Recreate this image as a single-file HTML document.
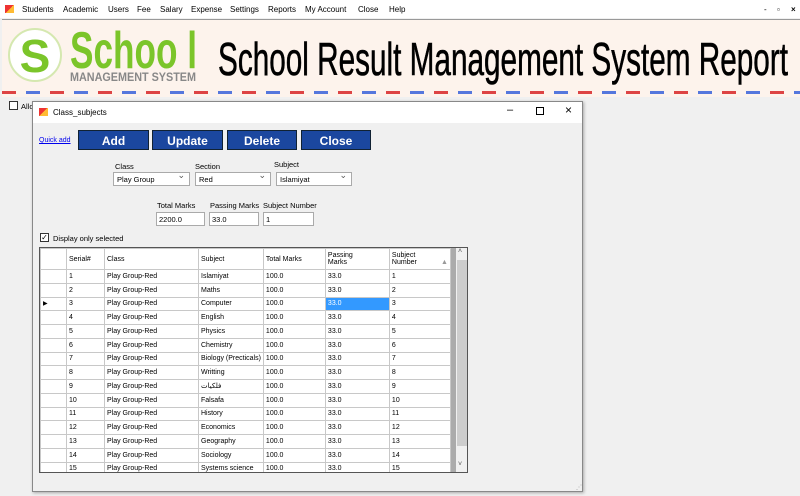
<!DOCTYPE html>
<html><head><meta charset="utf-8"><style>
*{box-sizing:border-box;margin:0;padding:0}
body{width:800px;height:496px;overflow:hidden;background:#f0f0f0;font-family:"Liberation Sans",sans-serif;font-size:8px;color:#000;position:relative}
.abs{position:absolute}
#menu{left:0;top:0;width:800px;height:18px;background:#fff;font-size:8px}
#menu span{position:absolute;top:5px}
#banner{left:2px;top:19px;width:798px;height:78px;background:#fdf3ec;border-top:1px solid #999}
.stripe{top:91px;left:2px;width:798px;height:3px;background:repeating-linear-gradient(90deg,#d44 0 14px,transparent 14px 24px,#57d 24px 38px,transparent 38px 48px)}
#dlg{left:32px;top:101px;width:551px;height:391px;background:#f0f0f0;border:1px solid #888;box-shadow:1px 1px 3px rgba(0,0,0,.3)}
.btn{position:absolute;top:28px;height:20px;background:#1b479f;color:#fff;font-weight:bold;font-size:12px;text-align:center;line-height:20px;border:1px solid #123}
.sel{position:absolute;height:14px;background:#fff;border:1px solid #aaa;font-size:7.5px;padding:2px 3px}
.sel:after{content:"⌄";position:absolute;right:4px;top:-3px;font-size:9px;color:#555}
.inp{position:absolute;height:14px;background:#fff;border:1px solid #aaa;font-size:7.5px;padding:2px 2px}
.lbl{position:absolute;font-size:7.5px}
#grid{left:39px;top:247px;width:429px;height:226px;background:#ababab;border:1px solid #555;overflow:hidden}
table{border-collapse:collapse;background:#fff;position:absolute;left:0;top:0}
td{border:1px solid #c8c8c8;height:13.75px;font-size:7px;padding:0 2px;white-space:nowrap;overflow:hidden}
tr.h td{height:21px;font-size:7px;line-height:7px}
</style></head><body>
<div id="menu" class="abs">
<div class="abs" style="left:5px;top:5px;width:9px;height:8px;background:linear-gradient(135deg,#e33 50%,#fb3 50%)"></div>
<span style="left:22px">Students</span><span style="left:63px">Academic</span><span style="left:108px">Users</span><span style="left:137px">Fee</span><span style="left:160px">Salary</span><span style="left:191px">Expense</span><span style="left:230px">Settings</span><span style="left:268px">Reports</span><span style="left:305px">My Account</span><span style="left:358px">Close</span><span style="left:389px">Help</span>
<span style="left:764px">-</span><span style="left:777px">▫</span><span style="left:791px;font-weight:bold">×</span>
</div>
<div id="banner" class="abs">
<div class="abs" style="left:6px;top:8px;width:54px;height:54px;border:2px solid #d5e8b0;border-radius:50%;background:#fff;color:#7bc52a;font-size:46px;font-weight:bold;text-align:center;line-height:52px">S</div>
<svg class="abs" style="left:0;top:0" width="798" height="78">
<text x="68" y="48" textLength="127" lengthAdjust="spacingAndGlyphs" font-family="Liberation Sans Narrow, Liberation Sans, sans-serif" font-weight="bold" font-size="52" fill="#7bc52a">Schoo l</text>
<text x="68" y="61" textLength="126" lengthAdjust="spacingAndGlyphs" font-family="Liberation Sans Narrow, Liberation Sans, sans-serif" font-weight="bold" font-size="12" fill="#888">MANAGEMENT SYSTEM</text>
<text x="216" y="55" textLength="570" lengthAdjust="spacingAndGlyphs" font-family="Liberation Sans Narrow, Liberation Sans, sans-serif" font-size="46" fill="#000" stroke="#000" stroke-width="0.6">School Result Management System Report</text>
</svg>
</div>
<div class="abs stripe"></div>
<div class="abs" style="left:9px;top:101px;width:9px;height:9px;border:1px solid #333;background:#fff"></div>
<div class="abs" style="left:21px;top:102px;font-size:7.5px">Allo</div>
<div id="dlg" class="abs">
<div class="abs" style="left:0;top:0;width:549px;height:21px;background:#fff"></div>
<div class="abs" style="left:6px;top:6px;width:9px;height:8px;background:linear-gradient(135deg,#e33 50%,#fb3 50%)"></div>
<div class="abs" style="left:20px;top:6px;font-size:8px">Class_subjects</div>
<div class="abs" style="left:474px;top:2px;font-size:11px">–</div>
<div class="abs" style="left:503px;top:5px;width:8px;height:8px;border:1px solid #000"></div>
<div class="abs" style="left:532px;top:1px;font-size:12px">×</div>
<div class="abs" style="left:6px;top:35px;font-size:7px;color:#00e;text-decoration:underline">Quick add</div>
<div class="btn" style="left:45px;width:71px">Add</div>
<div class="btn" style="left:119px;width:71px">Update</div>
<div class="btn" style="left:194px;width:70px">Delete</div>
<div class="btn" style="left:268px;width:70px">Close</div>
<div class="lbl" style="left:82px;top:60px">Class</div>
<div class="lbl" style="left:162px;top:60px">Section</div>
<div class="lbl" style="left:241px;top:58px">Subject</div>
<div class="sel" style="left:80px;top:70px;width:77px">Play Group</div>
<div class="sel" style="left:162px;top:70px;width:76px">Red</div>
<div class="sel" style="left:243px;top:70px;width:76px">Islamiyat</div>
<div class="lbl" style="left:124px;top:99px">Total Marks</div>
<div class="lbl" style="left:177px;top:99px">Passing Marks</div>
<div class="lbl" style="left:230px;top:99px">Subject Number</div>
<div class="inp" style="left:123px;top:110px;width:49px">2200.0</div>
<div class="inp" style="left:176px;top:110px;width:50px">33.0</div>
<div class="inp" style="left:230px;top:110px;width:51px">1</div>
<div class="abs" style="left:7px;top:131px;width:9px;height:9px;border:1px solid #333;background:#fff;font-size:8px;line-height:7px;text-align:center">✓</div>
<div class="lbl" style="left:20px;top:132px">Display only selected</div>
<div class="abs" style="left:543px;top:382px;font-size:6px;color:#999">⋰</div>
</div>
<div id="grid" class="abs">
<table>
<colgroup><col style="width:26px"><col style="width:38px"><col style="width:94px"><col style="width:62px"><col style="width:62px"><col style="width:64px"><col style="width:61px"></colgroup>
<tr class="h"><td></td><td>Serial#</td><td>Class</td><td>Subject</td><td>Total Marks</td><td>Passing<br>Marks</td><td>Subject<br>Number <span style="float:right;color:#999">▲</span></td></tr>
<tr><td></td><td>1</td><td>Play Group-Red</td><td>Islamiyat</td><td>100.0</td><td>33.0</td><td>1</td></tr>
<tr><td></td><td>2</td><td>Play Group-Red</td><td>Maths</td><td>100.0</td><td>33.0</td><td>2</td></tr>
<tr><td style="font-size:6px">▶</td><td>3</td><td>Play Group-Red</td><td>Computer</td><td>100.0</td><td style="background:#3399ff;color:#fff">33.0</td><td>3</td></tr>
<tr><td></td><td>4</td><td>Play Group-Red</td><td>English</td><td>100.0</td><td>33.0</td><td>4</td></tr>
<tr><td></td><td>5</td><td>Play Group-Red</td><td>Physics</td><td>100.0</td><td>33.0</td><td>5</td></tr>
<tr><td></td><td>6</td><td>Play Group-Red</td><td>Chemistry</td><td>100.0</td><td>33.0</td><td>6</td></tr>
<tr><td></td><td>7</td><td>Play Group-Red</td><td>Biology (Precticals)</td><td>100.0</td><td>33.0</td><td>7</td></tr>
<tr><td></td><td>8</td><td>Play Group-Red</td><td>Writting</td><td>100.0</td><td>33.0</td><td>8</td></tr>
<tr><td></td><td>9</td><td>Play Group-Red</td><td style="font-family:'DejaVu Sans',sans-serif">فلكيات</td><td>100.0</td><td>33.0</td><td>9</td></tr>
<tr><td></td><td>10</td><td>Play Group-Red</td><td>Falsafa</td><td>100.0</td><td>33.0</td><td>10</td></tr>
<tr><td></td><td>11</td><td>Play Group-Red</td><td>History</td><td>100.0</td><td>33.0</td><td>11</td></tr>
<tr><td></td><td>12</td><td>Play Group-Red</td><td>Economics</td><td>100.0</td><td>33.0</td><td>12</td></tr>
<tr><td></td><td>13</td><td>Play Group-Red</td><td>Geography</td><td>100.0</td><td>33.0</td><td>13</td></tr>
<tr><td></td><td>14</td><td>Play Group-Red</td><td>Sociology</td><td>100.0</td><td>33.0</td><td>14</td></tr>
<tr><td></td><td>15</td><td>Play Group-Red</td><td>Systems science</td><td>100.0</td><td>33.0</td><td>15</td></tr>
</table>
<div class="abs" style="left:416px;top:0;width:12px;height:225px;background:#f0f0f0">
<div class="abs" style="left:1px;top:12px;width:10px;height:186px;background:#cdcdcd"></div>
<div class="abs" style="left:2px;top:0;font-size:7px;color:#555">˄</div>
<div class="abs" style="left:2px;top:213px;font-size:7px;color:#555">˅</div>
</div>
</div>
</body></html>
